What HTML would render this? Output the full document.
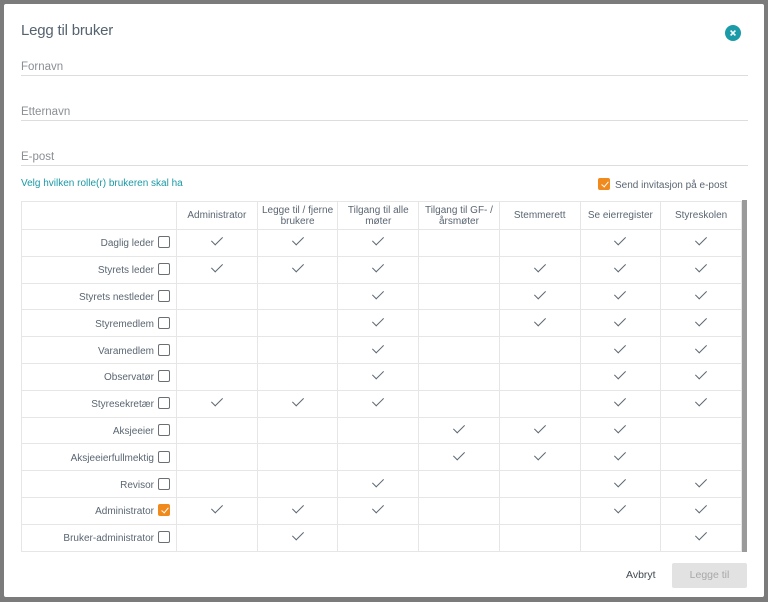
<!DOCTYPE html>
<html><head><meta charset="utf-8"><style>
*{box-sizing:border-box;margin:0;padding:0}
body{width:768px;height:602px;background:#7b7b7b;font-family:"Liberation Sans",sans-serif;position:relative;overflow:hidden}
.m{position:absolute;left:4px;top:4px;width:760px;height:593px;background:#fff;border-radius:2px}
.a{position:absolute}
h1{position:absolute;left:17px;top:18px;font-size:15px;font-weight:normal;color:#55636f;letter-spacing:-0.2px}
.f{position:absolute;left:17px;width:727px;border-bottom:1px solid #ddd;font-size:11.5px;color:#8a8f94;height:16px;line-height:14px}
.x{position:absolute;left:721px;top:21px;width:16px;height:16px;border-radius:50%;background:#1b9aa7}
table{position:absolute;left:17px;top:197px;border-collapse:collapse;table-layout:fixed;width:721px}
td{border:1px solid #e6e6e6;height:26.8px;text-align:center;font-size:10px;color:#5a6672;padding:0}
tr.h td{height:28px;line-height:11px}
td.l{text-align:right;padding-right:6px;width:155px}
.cb{display:inline-block;width:12px;height:12px;border:1px solid #6a6f74;border-radius:2px;vertical-align:-2px;margin-left:4px}
.on{background:#f08a1c;border-color:#f08a1c;position:relative}
.on:after{content:"";position:absolute;left:3.5px;top:0.5px;width:3px;height:6px;border:solid #fff;border-width:0 1.5px 1.5px 0;transform:rotate(40deg)}
.ck{display:inline-block;width:6px;height:11px;border:solid #5d6873;border-width:0 1.3px 1.3px 0;transform:rotate(45deg);margin-top:-4px}
</style></head><body><div class="m">
<h1>Legg til bruker</h1>
<div class="x"><svg width="16" height="16" viewBox="0 0 16 16"><path d="M5.6 5.6L10.4 10.4M10.4 5.6L5.6 10.4" stroke="#fff" stroke-width="1.6"/></svg></div>
<div class="f" style="top:56px">Fornavn</div>
<div class="f" style="top:101px">Etternavn</div>
<div class="f" style="top:146px">E-post</div>
<div class="a" style="left:17px;top:174px;font-size:10px;color:#1a99a6">Velg hvilken rolle(r) brukeren skal ha</div>
<div class="a" style="left:594px;top:174px;font-size:10px;color:#5a6672"><span class="cb on" style="margin:0 5px 0 0"></span>Send invitasjon på e-post</div>
<div class="a" style="left:738px;top:196px;width:5px;height:352px;background:#9a9a9a"></div>
<table>
<tr class="h"><td class="l"></td><td>Administrator</td><td>Legge til / fjerne brukere</td><td>Tilgang til alle møter</td><td>Tilgang til GF- / årsmøter</td><td>Stemmerett</td><td>Se eierregister</td><td>Styreskolen</td></tr>
<tr><td class="l">Daglig leder<span class="cb"></span></td><td><i class="ck"></i></td><td><i class="ck"></i></td><td><i class="ck"></i></td><td></td><td></td><td><i class="ck"></i></td><td><i class="ck"></i></td></tr>
<tr><td class="l">Styrets leder<span class="cb"></span></td><td><i class="ck"></i></td><td><i class="ck"></i></td><td><i class="ck"></i></td><td></td><td><i class="ck"></i></td><td><i class="ck"></i></td><td><i class="ck"></i></td></tr>
<tr><td class="l">Styrets nestleder<span class="cb"></span></td><td></td><td></td><td><i class="ck"></i></td><td></td><td><i class="ck"></i></td><td><i class="ck"></i></td><td><i class="ck"></i></td></tr>
<tr><td class="l">Styremedlem<span class="cb"></span></td><td></td><td></td><td><i class="ck"></i></td><td></td><td><i class="ck"></i></td><td><i class="ck"></i></td><td><i class="ck"></i></td></tr>
<tr><td class="l">Varamedlem<span class="cb"></span></td><td></td><td></td><td><i class="ck"></i></td><td></td><td></td><td><i class="ck"></i></td><td><i class="ck"></i></td></tr>
<tr><td class="l">Observatør<span class="cb"></span></td><td></td><td></td><td><i class="ck"></i></td><td></td><td></td><td><i class="ck"></i></td><td><i class="ck"></i></td></tr>
<tr><td class="l">Styresekretær<span class="cb"></span></td><td><i class="ck"></i></td><td><i class="ck"></i></td><td><i class="ck"></i></td><td></td><td></td><td><i class="ck"></i></td><td><i class="ck"></i></td></tr>
<tr><td class="l">Aksjeeier<span class="cb"></span></td><td></td><td></td><td></td><td><i class="ck"></i></td><td><i class="ck"></i></td><td><i class="ck"></i></td><td></td></tr>
<tr><td class="l">Aksjeeierfullmektig<span class="cb"></span></td><td></td><td></td><td></td><td><i class="ck"></i></td><td><i class="ck"></i></td><td><i class="ck"></i></td><td></td></tr>
<tr><td class="l">Revisor<span class="cb"></span></td><td></td><td></td><td><i class="ck"></i></td><td></td><td></td><td><i class="ck"></i></td><td><i class="ck"></i></td></tr>
<tr><td class="l">Administrator<span class="cb on"></span></td><td><i class="ck"></i></td><td><i class="ck"></i></td><td><i class="ck"></i></td><td></td><td></td><td><i class="ck"></i></td><td><i class="ck"></i></td></tr>
<tr><td class="l">Bruker-administrator<span class="cb"></span></td><td></td><td><i class="ck"></i></td><td></td><td></td><td></td><td></td><td><i class="ck"></i></td></tr>
</table>
<div class="a" style="left:622px;top:565px;font-size:10.5px;color:#3f4850">Avbryt</div>
<div class="a" style="left:668px;top:559px;width:75px;height:25px;background:#e2e2e2;border-radius:2px;color:#a8a8a8;font-size:10.5px;text-align:center;line-height:25px">Legge til</div>
</div></body></html>
